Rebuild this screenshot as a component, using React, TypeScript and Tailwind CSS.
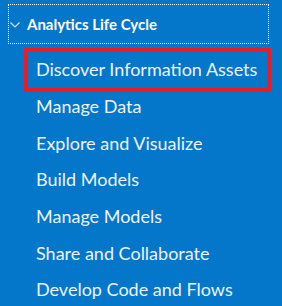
import React from "react";

const items = [
  "Discover Information Assets",
  "Manage Data",
  "Explore and Visualize",
  "Build Models",
  "Manage Models",
  "Share and Collaborate",
  "Develop Code and Flows",
];

function Chevron() {
  return (
    <svg width="10" height="6" viewBox="0 0 10 6" fill="none" className="mt-[2px] shrink-0">
      <path d="M0.5 0.5 L5 5 L9.5 0.5" stroke="#cfe2f3" strokeWidth="1.2" />
    </svg>
  );
}

export default function App() {
  return (
    <div
      className="h-[306px] w-[282px] overflow-hidden bg-[#0477ca] pt-[4px]"
      style={{ fontFamily: "Lato, 'Noto Sans', sans-serif" }}
    >
      <div className="ml-[8px] flex h-[40px] w-[261px] items-center gap-[7px] border border-dotted border-white pl-[1px]">
        <Chevron />
        <span className="text-[15px] font-bold leading-none text-white">Analytics Life Cycle</span>
      </div>

      <ul className="mt-[7px] pl-[24px] pr-[11px]">
        {items.map((label, i) => (
          <li key={label} className="relative flex h-[36.67px] items-center pl-[12px]">
            {i === 0 ? (
              <span className="pointer-events-none absolute -top-[3px] -bottom-[4px] inset-x-0 border-4 border-[#ed1c24]" />
            ) : null}
            <span className="text-[18px] leading-none text-[#eef4fa]">{label}</span>
          </li>
        ))}
      </ul>
    </div>
  );
}
